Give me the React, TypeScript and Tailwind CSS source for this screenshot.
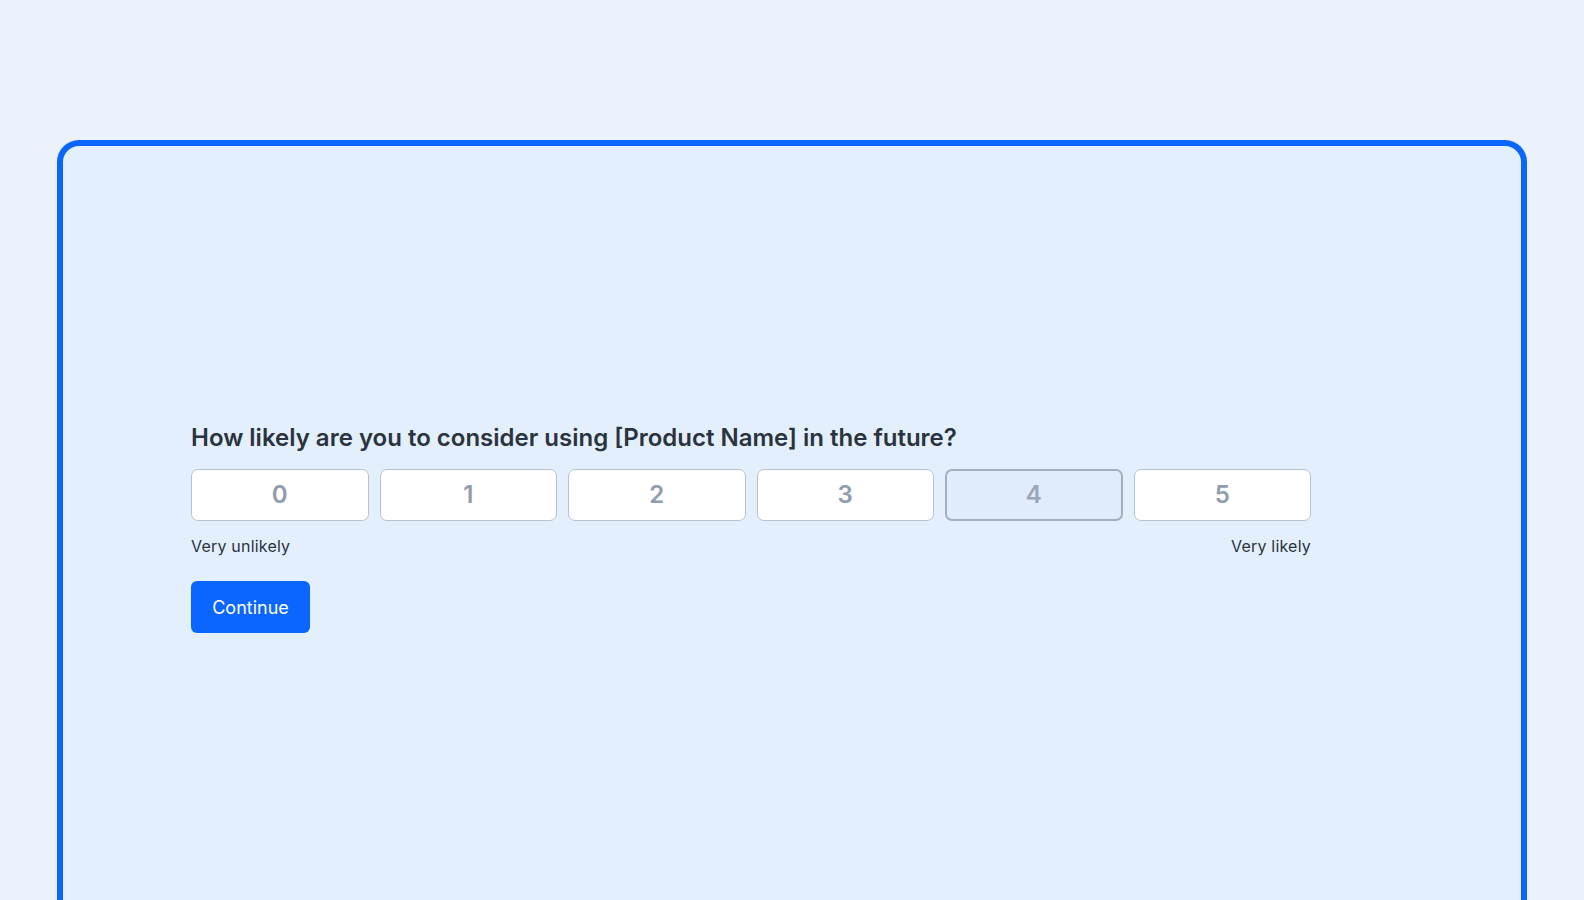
import React from "react";

export default function App() {
  const options = [0, 1, 2, 3, 4, 5];
  const selected = 4;
  return (
    <div
      className="min-h-[900px] h-[900px] overflow-hidden bg-[#ebf2fe] pt-[140px] px-[57px]"
      style={{ fontFamily: "Inter, 'Noto Sans', sans-serif" }}
    >
      <div className="h-[800px] rounded-t-[22px] border-[6px] border-b-0 border-[#0a66ff] bg-[#e4effd] pl-[128px] pt-[277px]">
        <div className="w-[1120px]">
          <h1 className="text-[24px] leading-[30px] font-semibold text-[#2a333e] tracking-[0px]">
            How likely are you to consider using [Product Name] in the future?
          </h1>
          <div className="mt-[16px] grid grid-cols-6 gap-[11px]">
            {options.map((n) => (
              <button
                key={n}
                className={
                  n === selected
                    ? "h-[52px] rounded-[7px] border-2 border-[#a3afbd] bg-[#e0ecfa] text-[24px] font-semibold text-[#9aa6b5]"
                    : "h-[52px] rounded-[7px] border border-[#b9c3cf] bg-white text-[24px] font-semibold text-[#8f9cad]"
                }
              >
                {n}
              </button>
            ))}
          </div>
          <div className="mt-[15px] flex justify-between text-[16px] leading-[20px] tracking-[0.2px] text-[#2a333e]">
            <span>Very unlikely</span>
            <span>Very likely</span>
          </div>
          <button className="mt-[25px] h-[52px] w-[119px] rounded-[6px] bg-[#0a66ff] text-[18px] text-white">
            Continue
          </button>
        </div>
      </div>
    </div>
  );
}
